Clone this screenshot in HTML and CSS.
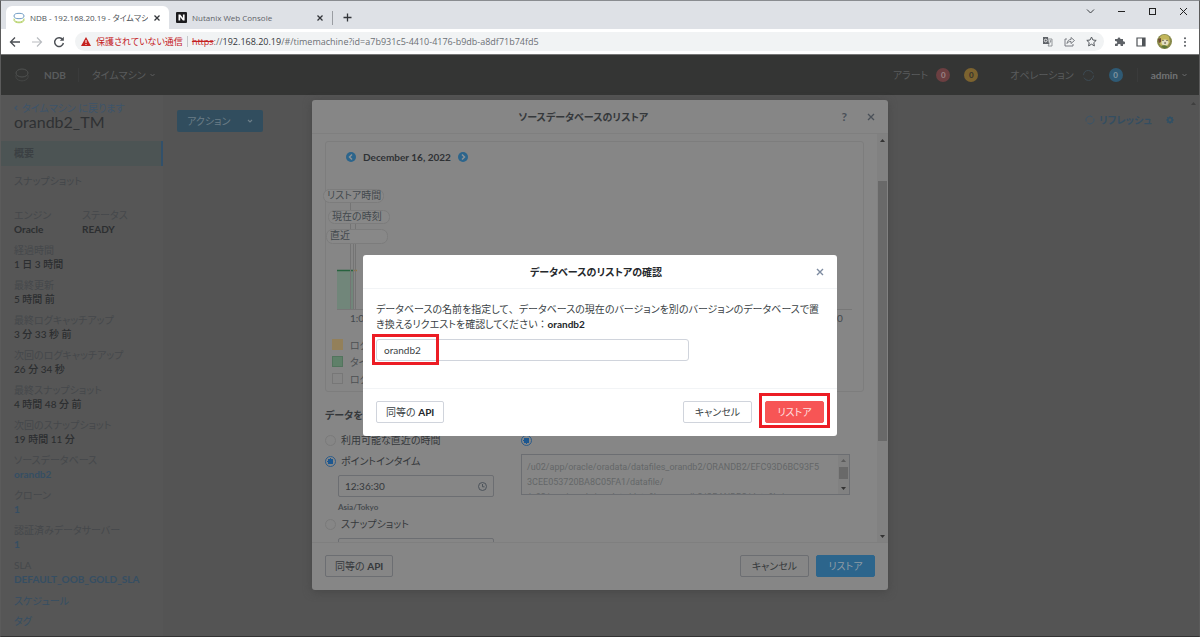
FILE: index.html
```html
<!DOCTYPE html>
<html lang="ja">
<head>
<meta charset="UTF-8">
<meta name="viewport" content="width=device-width, initial-scale=1.0">
<title>NDB - 192.168.20.19 - タイムマシン</title>
<link rel="stylesheet" href="styles.css">
</head>
<body>

    <!-- browser window -->
    <header class="browser">
        <div class="tab-strip">
            <div class="tab active">
                <svg width="12" height="12" viewBox="0 0 12 12" fill="none" stroke-width="1"><ellipse cx="6" cy="4" rx="5" ry="2.7" stroke="#6f9cc4"/><path d="M1 6.5c0 4.8 10 4.8 10 0M1 7.5v1c1 3 9 3 10 0v-1" stroke="#b7d36b"/></svg>
                <span class="tab-title">NDB - 192.168.20.19 - タイムマシン</span>
                <button class="tab-close" aria-label="閉じる"><svg width="8" height="8" viewBox="0 0 8 8"><path d="M1.5 1.5l5 5M6.5 1.5l-5 5" stroke="#33363a" stroke-width="1.3"/></svg></button>
            </div>
            <div class="tab">
                <svg width="11" height="11" viewBox="0 0 11 11"><rect width="11" height="11" rx="1" fill="#1c1c1e"/><path d="M2.5 8.5v-6h1.8l2.6 3.6V2.5h1.7v6H6.900L4.200 4.900v3.600z" fill="#fff"/></svg>
                <span class="tab-title">Nutanix Web Console</span>
                <button class="tab-close" aria-label="閉じる"><svg width="8" height="8" viewBox="0 0 8 8"><path d="M1.500 1.500l5 5M6.500 1.500l-5 5" stroke="#33363a" stroke-width="1.300"/></svg></button>
            </div>
            <button class="new-tab" aria-label="新しいタブ"><svg width="9" height="9" viewBox="0 0 9 9"><path d="M4.500 .5v8M.5 4.500h8" stroke="#33363a" stroke-width="1.300"/></svg></button>
            <div class="window-buttons">
                <button aria-label="タブを検索"><svg width="9" height="9" viewBox="0 0 9 9" fill="none"><path d="M1 2.500l3.500 3.500 3.500-3.500" stroke="#3c4043"/></svg></button>
                <button aria-label="最小化"><svg width="9" height="9" viewBox="0 0 9 9"><path d="M1 4.500h7" stroke="#222"/></svg></button>
                <button aria-label="最大化"><svg width="9" height="9" viewBox="0 0 9 9" fill="none"><rect x="1.500" y="1.500" width="6" height="6" stroke="#222"/></svg></button>
                <button aria-label="ウィンドウを閉じる"><svg width="9" height="9" viewBox="0 0 9 9"><path d="M1 1l7 7M8 1l-7 7" stroke="#222"/></svg></button>
            </div>
        </div>
        <div class="toolbar">
            <button aria-label="戻る"><svg width="12" height="12" viewBox="0 0 12 12" fill="none" stroke="#4b4f54" stroke-width="1.300"><path d="M11 6H1.500M6 1.500L1.500 6 6 10.500"/></svg></button>
            <button aria-label="進む"><svg width="12" height="12" viewBox="0 0 12 12" fill="none" stroke="#b9bcc0" stroke-width="1.200"><path d="M1 6h9.500M6 1.500L10.500 6 6 10.500"/></svg></button>
            <button aria-label="再読み込み"><svg width="12" height="12" viewBox="0 0 12 12" fill="none" stroke="#4b4f54" stroke-width="1.400"><path d="M9.700 3.600A4.400 4.400 0 1 0 10.400 7"/><path d="M10.800 .8v4H6.800z" fill="#4b4f54" stroke="none"/></svg></button>
            <div class="address">
                <svg width="10" height="9" viewBox="0 0 10 9"><path d="M5 0l5 9H0z" fill="#c5221f"/><path d="M5 3v3M5 7v1" stroke="#fff"/></svg>
                <span class="insecure">保護されていない通信</span>
                <span class="url"><s>https</s>://<b>192.168.20.19</b>/#/timemachine?id=a7b931c5-4410-4176-b9db-a8df71b74fd5</span>
                <div class="address-icons">
                    <svg width="11" height="11" viewBox="0 0 11 11"><path d="M1 1h5l1 7H1z" fill="#5f6368"/><path d="M6.500 3H10v7H6l1-2M7.500 5H9.500M8.500 4.500v1c0 1-1 2-1.500 2" fill="none" stroke="#7d8186" stroke-width=".8"/><circle cx="3.700" cy="4.500" r="1.400" fill="none" stroke="#fff" stroke-width=".8"/></svg>
                    <svg width="11" height="11" viewBox="0 0 11 11" fill="none" stroke="#6d7176" stroke-width=".9"><path d="M3 3H1v7h8V8"/><path d="M3 7.500c.4-3 2-4 4-4v-2L10.500 4.500 7 7.500v-2c-2 0-3 .4-4 2z"/></svg>
                    <svg width="11" height="11" viewBox="0 0 11 11" fill="none" stroke="#55595e"><path d="M5.500 1l1.400 3 3.300.4-2.400 2.200.6 3.300-2.900-1.700-2.900 1.700.6-3.300L.8 4.400 4.100 4z"/></svg>
                </div>
            </div>
            <div class="extensions">
                <svg width="11" height="11" viewBox="0 0 11 11"><path d="M1 3h2.600a1.400 1.400 0 1 1 2.800 0H9v2.600a1.400 1.400 0 1 1 0 2.400V10H6.500a1.400 1.400 0 1 0-2.600 0H1V7.600a1.400 1.400 0 1 0 0-2.400z" fill="#5f6368"/></svg>
                <svg width="10" height="10" viewBox="0 0 10 10"><path d="M1 1h8v8H1z" fill="#fff" stroke="#4f5357" stroke-width="1.200"/><path d="M6 1h3v8H6z" fill="#4f5357"/></svg>
                <svg width="15" height="15" viewBox="0 0 15 15"><circle cx="7.500" cy="7.500" r="7.500" fill="#87894a"/><path d="M3 3c2-3 7-3 9 0l1 5-3 5H5L2 9z" fill="#c2b65a"/><path d="M1 5l3-1v4L2 9z" fill="#704d36"/><ellipse cx="8" cy="8.500" rx="3.500" ry="3" fill="#e3dfc2"/><path d="M5.500 6h1v1h-1zM9.500 6h1v1h-1zM7.300 8.500h1.600v1H7.300z" fill="#352d22"/><path d="M4 12c2-1 5-1 7 1-2 2-5 2-7-1z" fill="#5d7638"/></svg>
                <svg width="4" height="10" viewBox="0 0 4 10" fill="#55595e"><circle cx="2" cy="1.200" r="1"/><circle cx="2" cy="5" r="1"/><circle cx="2" cy="8.800" r="1"/></svg>
            </div>
        </div>
    </header>

    <!-- application -->
    <div class="app">
        <nav class="topbar">
            <svg class="logo" width="14" height="14" viewBox="0 0 14 14" fill="none" stroke="#505251"><ellipse cx="7" cy="5" rx="6" ry="4"/><path d="M1 7v2.500c2 4.500 10 4.500 12 0V7" stroke="#444645"/></svg>
            <span class="product">NDB</span>
            <a href="#" class="top-menu">タイムマシン <svg width="5" height="4" viewBox="0 0 5 4" fill="none" stroke="#5c5e5f"><path d="M.5 1l2 2 2-2"/></svg></a>
            <div class="top-right">
                <span>アラート</span>
                <span class="badge red">0</span>
                <span class="badge amber">0</span>
                <span class="operations">オペレーション</span>
                <svg width="13" height="13" viewBox="0 0 13 13" fill="none"><circle cx="6.500" cy="6.500" r="5" stroke="#3d4b54" stroke-dasharray="13 2.700"/></svg>
                <span class="badge blue">0</span>
                <a href="#" class="admin">admin <svg width="5" height="4" viewBox="0 0 5 4" fill="none" stroke="#6a6c6d"><path d="M.5 1l2 2 2-2"/></svg></a>
            </div>
        </nav>
        <div class="workspace">
            <aside class="sidebar">
                <a href="#" class="back"><svg width="4" height="6" viewBox="0 0 4 6" fill="none" stroke="#3d546a" stroke-width="1.200"><path d="M3 .8L1 3l2 2.200"/></svg>タイムマシン に戻ります</a>
                <h1>orandb2_TM</h1>
                <a href="#" class="side-item current">概要</a>
                <a href="#" class="side-item">スナップショット</a>
                <dl class="facts">
                    <div class="pair">
                        <div><dt>エンジン</dt><dd>Oracle</dd></div>
                        <div><dt>ステータス</dt><dd>READY</dd></div>
                    </div>
                    <div><dt>経過時間</dt><dd>1 日 3 時間</dd></div>
                    <div><dt>最終更新</dt><dd>5 時間 前</dd></div>
                    <div><dt>最終ログキャッチアップ</dt><dd>3 分 33 秒 前</dd></div>
                    <div><dt>次回のログキャッチアップ</dt><dd>26 分 34 秒</dd></div>
                    <div><dt>最終スナップショット</dt><dd>4 時間 48 分 前</dd></div>
                    <div><dt>次回のスナップショット</dt><dd>19 時間 11 分</dd></div>
                    <div><dt>ソースデータベース</dt><dd><a href="#">orandb2</a></dd></div>
                    <div><dt>クローン</dt><dd><a href="#">1</a></dd></div>
                    <div><dt>認証済みデータサーバー</dt><dd><a href="#">1</a></dd></div>
                    <div><dt>SLA</dt><dd><a href="#">DEFAULT_OOB_GOLD_SLA</a></dd></div>
                </dl>
                <a href="#" class="side-link">スケジュール</a>
                <a href="#" class="side-link">タグ</a>
            </aside>
            <main class="content">
                <button class="action">アクション <svg width="6" height="5" viewBox="0 0 6 5" fill="none" stroke="#6b7d87" stroke-width="1.200"><path d="M1 1l2 2 2-2"/></svg></button>
                <div class="page-tools">
                    <a href="#"><svg width="10" height="10" viewBox="0 0 10 10" fill="none" stroke="#3b5468"><path d="M1.200 6.500A4 4 0 0 1 7.500 2M8.800 3.500A4 4 0 0 1 2.500 8"/></svg> リフレッシュ</a>
                    <button aria-label="設定"><svg width="8" height="8" viewBox="0 0 8 8" fill="none"><circle cx="4" cy="4" r="2.200" stroke="#2f5066" stroke-width="1.600"/><path d="M4 0v1.500M4 6.500V8M0 4h1.500M6.500 4H8M1.200 1.200l1 1M5.800 5.800l1 1M6.800 1.200l-1 1M1.200 6.800l1-1" stroke="#2f5066"/></svg></button>
                </div>
                <svg class="scroll-up" width="5" height="3" viewBox="0 0 5 3"><path d="M0 3L2.500 0 5 3z" fill="#3f3f3f"/></svg>
            </main>
        </div>
    </div>

    <!-- restore dialog -->
    <div class="layer">
        <section class="dialog restore" role="dialog" aria-labelledby="restore-title">
            <div class="dialog-head">
                <h2 id="restore-title">ソースデータベースのリストア</h2>
                <div class="head-buttons">
                    <button aria-label="ヘルプ">?</button>
                    <button aria-label="閉じる"><svg width="8" height="8" viewBox="0 0 8 8"><path d="M1 1l6 6M7 1L1 7" stroke="#4a5058" stroke-width="1.300"/></svg></button>
                </div>
            </div>
            <div class="dialog-body">
                <div class="scroll-area">
                    <div class="timeline">
                        <div class="date-nav">
                            <button aria-label="前の日"><svg width="10" height="10" viewBox="0 0 10 10" fill="none"><circle cx="5" cy="5" r="5" fill="#2c658c"/><path d="M6 2.500L3.500 5 6 7.500" stroke="#8c9296" stroke-width="1.500"/></svg></button>
                            <span>December 16, 2022</span>
                            <button aria-label="次の日"><svg width="10" height="10" viewBox="0 0 10 10" fill="none"><circle cx="5" cy="5" r="5" fill="#2c658c"/><path d="M4 2.500L6.500 5 4 7.500" stroke="#8c9296" stroke-width="1.500"/></svg></button>
                        </div>
                        <svg class="chart" width="100%" height="146">
                            <rect x="11" y="91" width="16" height="38" fill="#71867a"/>
                            <path d="M11 90.500h16" stroke="#27633f" stroke-width="1.500"/>
                            <path d="M27 90.500h4" stroke="#92763f" stroke-width="1.500"/>
                            <path d="M11 129.500h515" stroke="#777"/>
                            <path d="M24.500 20v109M27.500 62v67M29.500 42v87" stroke="#747474"/>
                            <g fill="#888" stroke="#7c7c7c">
                                <rect x="-2.500" y="9.500" width="60" height="13" rx="6"/>
                                <rect x="2.500" y="30.500" width="61" height="13" rx="6"/>
                                <rect x=".5" y="49.500" width="61" height="14" rx="6"/>
                            </g>
                            <text x="1" y="19">リストア時間</text>
                            <text x="6" y="40">現在の時刻</text>
                            <text x="4" y="59">直近</text>
                            <text x="24" y="142">1:00</text>
                            <text x="511" y="142">0</text>
                        </svg>
                        <ul class="legend">
                            <li><span class="swatch log"></span>ログ</li>
                            <li><span class="swatch time"></span>タイ</li>
                            <li><span class="swatch"></span>ログ</li>
                        </ul>
                    </div>
                    <h3>データを</h3>
                    <form class="restore-form">
                        <div class="choices">
                            <label class="choice"><input type="radio" name="point"> 利用可能な直近の時間</label>
                            <label class="choice"><input type="radio" name="point" checked> ポイントインタイム</label>
                            <div class="time-field">
                                <input type="text" value="12:36:30" aria-label="時刻">
                                <svg width="9" height="9" viewBox="0 0 9 9" fill="none" stroke="#4c535a"><circle cx="4.500" cy="4.500" r="4"/><path d="M4.500 2v2.800H6.500"/></svg>
                            </div>
                            <span class="zone">Asia/Tokyo</span>
                            <label class="choice"><input type="radio" name="point"> スナップショット</label>
                            <select class="snapshot" aria-label="スナップショット"></select>
                        </div>
                        <div class="location">
                            <label class="choice"><input type="radio" name="location" aria-label="場所" checked></label>
                            <div class="path-box">
                                <textarea aria-label="パス" readonly>/u02/app/oracle/oradata/datafiles_orandb2/ORANDB2/EFC93D6BC93F5
3CEE053720BA8C05FA1/datafile/
/u02/app/oracle/oradata/datafiles_orandb2/ORANDB2/datafile/</textarea>
                                <div class="mini-scroll">
                                    <svg width="5" height="3" viewBox="0 0 5 3"><path d="M0 3L2.500 0 5 3z" fill="#5c5c5c"/></svg>
                                    <span class="mini-thumb"></span>
                                    <svg width="5" height="3" viewBox="0 0 5 3"><path d="M0 0h5L2.500 3z" fill="#333"/></svg>
                                </div>
                            </div>
                        </div>
                    </form>
                </div>
                <div class="scrollbar">
                    <svg width="5" height="3" viewBox="0 0 5 3"><path d="M0 3L2.500 0 5 3z" fill="#333"/></svg>
                    <span class="thumb"></span>
                    <svg width="5" height="3" viewBox="0 0 5 3"><path d="M0 0h5L2.500 3z" fill="#333"/></svg>
                </div>
            </div>
            <div class="dialog-foot">
                <button class="btn">同等の <b>API</b></button>
                <button class="btn push">キャンセル</button>
                <button class="btn primary">リストア</button>
            </div>
        </section>
    </div>

    <!-- confirmation dialog -->
    <div class="layer upper">
        <section class="dialog confirm" role="dialog" aria-labelledby="confirm-title">
            <div class="dialog-head">
                <h2 id="confirm-title">データベースのリストアの確認</h2>
                <div class="head-buttons">
                    <button aria-label="閉じる"><svg width="8" height="8" viewBox="0 0 8 8"><path d="M1 1l6 6M7 1L1 7" stroke="#7d8ba0" stroke-width="1.400"/></svg></button>
                </div>
            </div>
            <div class="confirm-body">
                <label for="db-name">データベースの名前を指定して<span class="full">、</span>データベースの現在のバージョンを別のバージョンのデータベースで置<br>き換えるリクエストを確認してください<span class="full">：</span><b>orandb2</b></label>
                <div class="name-field">
                    <input type="text" id="db-name" value="orandb2">
                    <span class="mark mark-name"></span>
                </div>
            </div>
            <div class="dialog-foot">
                <button class="btn">同等の <b>API</b></button>
                <button class="btn push">キャンセル</button>
                <div class="marked">
                    <button class="btn danger">リストア</button>
                    <span class="mark mark-button"></span>
                </div>
            </div>
        </section>
    </div>

</body>
</html>
```
FILE: styles.css
```css
* {
    box-sizing: border-box;
}

body {
    margin: 0;
    height: 100vh;
    display: flex;
    flex-direction: column;
    overflow: hidden;
    position: relative;
    font-family: Lato, "Noto Sans CJK JP", sans-serif;
    font-size: 10px;
    font-feature-settings: "palt";
    line-height: 14px;
    border: 1px solid #5b5b5b;
    border-top-color: #898c90;
    border-bottom-color: #333;
    background-color: #545454;
}

svg {
    flex: none;
    display: block;
}

a {
    text-decoration: none;
    color: inherit;
}

button, input, select, textarea {
    font: inherit;
    font-feature-settings: inherit;
    color: inherit;
    margin: 0;
    padding: 0;
    border: none;
    background: none;
}

button {
    cursor: pointer;
}

/* browser window */
.browser {
    font-family: "Open Sans", "Noto Sans CJK JP", sans-serif;
    font-size: 9px;
    color: #5f6368;
    background-color: #dee1e6;
}

.tab-strip {
    display: flex;
    align-items: center;
    height: 28px;
    padding-left: 5px;
}

.tab {
    display: flex;
    align-items: center;
    gap: 5px;
    height: 23px;
    width: 163px;
    padding: 0 8px 0 7px;
    margin-top: 5px;
}

.tab.active {
    background-color: #fff;
    border-radius: 6px 6px 0 0;
    color: #4d5156;
}

.tab-title {
    flex: 1;
    font-size: 8px;
    white-space: nowrap;
    overflow: hidden;
}

.tab-close {
    display: flex;
}

.new-tab {
    display: flex;
    height: 14px;
    align-items: center;
    border-left: 1px solid #9a9da2;
    padding-left: 10px;
    margin-top: 5px;
}

.window-buttons {
    display: flex;
    gap: 22px;
    margin: 0 11px 8px auto;
}

.toolbar {
    display: flex;
    align-items: center;
    gap: 10px;
    height: 25px;
    padding: 0 12px 0 8px;
    background-color: #fff;
}

.toolbar button {
    display: flex;
}

.address {
    flex: 1;
    display: flex;
    align-items: center;
    height: 19px;
    padding: 0 7px 0 6px;
    border-radius: 10px;
    background-color: #f1f3f4;
}

.insecure {
    color: #c5221f;
    padding: 0 4px 0 5px;
    border-right: 1px solid #c4c7ca;
    line-height: 11px;
}

.url {
    padding-left: 4px;
    color: #6c7075;
}

.url s {
    color: #c5221f;
}

.url b {
    font-weight: normal;
    color: #33363a;
}

.address-icons {
    display: flex;
    gap: 11px;
    margin-left: auto;
}

.extensions {
    display: flex;
    align-items: center;
    gap: 11px;
}

/* application */
.app {
    flex: 1;
    min-height: 0;
    display: flex;
    flex-direction: column;
    border-top: 1px solid #777;
}

.topbar {
    display: flex;
    align-items: center;
    height: 40px;
    padding: 0 12px 0 14px;
    background-color: #343534;
    color: #5a5c5d;
}

.product {
    font-weight: bold;
    padding: 0 12px 0 15px;
    border-right: 1px solid #3a3b3b;
}

.top-menu {
    display: flex;
    align-items: center;
    gap: 4px;
    padding-left: 13px;
}

.top-right {
    display: flex;
    align-items: center;
    gap: 8px;
    margin-left: auto;
}

.badge {
    width: 14px;
    height: 14px;
    border-radius: 7px;
    text-align: center;
    font-size: 8px;
    font-weight: bold;
    margin-right: 6px;
}

.badge.red {
    background-color: #6b3f41;
    color: #9a8485;
}

.badge.amber {
    background-color: #7c632f;
    color: #33312c;
    margin-right: 24px;
}

.badge.blue {
    background-color: #2f5a74;
    color: #8296a1;
    margin-left: 6px;
}

.admin {
    display: flex;
    align-items: center;
    gap: 4px;
    font-weight: bold;
    color: #717374;
    padding-left: 13px;
    border-left: 1px solid #3a3b3b;
}

.workspace {
    flex: 1;
    min-height: 0;
    display: flex;
}

.sidebar {
    width: 162px;
    padding-top: 7px;
    background-color: #565656;
    color: #43464a;
    overflow: hidden;
}

.back {
    display: flex;
    align-items: center;
    gap: 4px;
    height: 12px;
    line-height: 12px;
    padding-left: 13px;
    color: #3d546a;
}

h1 {
    margin: 0 0 11px;
    padding-left: 13px;
    font-size: 16px;
    line-height: 16px;
    font-weight: normal;
    color: #2f3133;
}

.side-item {
    display: block;
    line-height: 25px;
    padding-left: 13px;
    margin-bottom: 3px;
}

.side-item.current {
    background-color: #4c5454;
    border-right: 2px solid #32506a;
    font-weight: bold;
    color: #3b4043;
}

.facts {
    margin: 14px 0 0;
    padding-left: 13px;
    display: flex;
    flex-direction: column;
    gap: 7px;
}

.pair {
    display: grid;
    grid-template-columns: 68px 1fr;
}

dt {
    color: #45484b;
}

dd {
    margin: 0;
    font-weight: 500;
    color: #2c2e30;
}

dd a {
    color: #354e63;
}

.pair dd, dd a {
    font-weight: bold;
}

.side-link {
    display: block;
    padding: 6px 0 0 13px;
    color: #354e63;
}

.facts + .side-link {
    padding-top: 8px;
}

.content {
    flex: 1;
    display: flex;
    align-items: flex-start;
    padding: 7px 3px 0 14px;
}

.action {
    display: flex;
    align-items: center;
    justify-content: space-between;
    width: 86px;
    height: 22px;
    margin-top: 8px;
    padding: 0 10px;
    border-radius: 2px;
    background-color: #314d5e;
    color: #6b7d87;
}

.page-tools {
    display: flex;
    align-items: center;
    gap: 14px;
    margin: 11px 17px 0 auto;
    color: #344e61;
    font-weight: bold;
}

.page-tools a {
    display: flex;
    align-items: center;
    gap: 4px;
}

/* dialogs */
.layer {
    position: absolute;
    top: 99px;
    left: 0;
    right: 0;
    display: flex;
    justify-content: center;
}

.layer.upper {
    top: 254px;
}

.dialog {
    border-radius: 3px;
}

.dialog-head {
    display: flex;
    align-items: center;
    height: 34px;
    padding: 0 13px;
}

h2 {
    flex: 1;
    margin: 0;
    font-size: 10px;
    font-weight: bold;
    text-align: center;
}

.head-buttons {
    display: flex;
    align-items: center;
    gap: 20px;
    font-weight: bold;
    font-size: 12px;
}

.dialog-foot {
    display: flex;
    align-items: center;
    gap: 7px;
    height: 48px;
    padding: 0 13px 2px;
}

.btn {
    height: 22px;
    padding: 0 9px;
    border: 1px solid #d0d4dc;
    border-radius: 2px;
    white-space: nowrap;
}

.push {
    width: 69px;
    margin-left: auto;
}

.restore {
    width: 576px;
    background-color: #868686;
    color: #35383b;
    box-shadow: 0 2px 8px #484848;
}

.restore .dialog-head {
    border-bottom: 1px solid #7f7f7f;
}

.restore .head-buttons {
    color: #4a5058;
}

.restore .dialog-foot {
    border-top: 1px solid #7f7f7f;
}

.restore .btn {
    border-color: #6c6e72;
}

.restore .primary {
    width: 59px;
    border-color: #2c658c;
    background-color: #2c658c;
    color: #909da6;
}

.dialog-body {
    display: flex;
    height: 408px;
    overflow: hidden;
}

.scroll-area {
    flex: 1;
    padding: 7px 13px 0;
}

.timeline {
    height: 251px;
    border: 1px solid #7d7d7d;
    border-radius: 3px;
    color: #484c50;
}

.date-nav {
    display: flex;
    align-items: center;
    gap: 7px;
    padding: 8px 0 0 20px;
    margin-bottom: 16px;
    font-weight: bold;
    color: #2f3235;
}

.date-nav button {
    display: flex;
}

.chart {
    overflow: visible;
    fill: #43484d;
}

.legend {
    list-style: none;
    margin: 10px 0 0;
    padding: 0 0 0 6px;
    color: #4d5053;
}

.legend li {
    display: flex;
    align-items: center;
    gap: 7px;
    height: 17px;
}

.swatch {
    width: 11px;
    height: 11px;
    border: 1px solid #777;
}

.swatch.log {
    background-color: #93805a;
    border: none;
}

.swatch.time {
    background-color: #5f8069;
    border: 1px solid #52745d;
}

h3 {
    margin: 16px 0 11px;
    font-size: 10px;
    font-weight: bold;
}

.restore-form {
    display: grid;
    grid-template-columns: 196px 1fr;
}

.choices {
    display: flex;
    flex-direction: column;
}

.choice {
    display: flex;
    align-items: center;
    gap: 5px;
    height: 14px;
}

.choice + .choice {
    margin: 7px 0;
}

input[type="radio"] {
    appearance: none;
    width: 11px;
    height: 11px;
    border: 1px solid #7a7a7a;
    border-radius: 50%;
}

input[type="radio"]:checked {
    border-color: #2c5c8a;
    background: radial-gradient(#1c5790 3px, transparent 3px);
}

.time-field {
    display: flex;
    align-items: center;
    width: 156px;
    height: 22px;
    margin-left: 13px;
    padding: 0 6px;
    border: 1px solid #6c6e72;
    border-radius: 2px;
}

.time-field input {
    flex: 1;
    min-width: 0;
}

.zone {
    margin: 3px 0 3px 13px;
    font-size: 8px;
    font-weight: bold;
    color: #484c50;
}

.snapshot {
    appearance: none;
    width: 156px;
    height: 22px;
    flex: none;
    margin: 7px 0 0 13px;
    border: 1px solid #6c6e72;
    border-radius: 2px;
}

.location {
    margin-right: 14px;
}

.path-box {
    display: flex;
    height: 41px;
    margin-top: 7px;
    border: 1px solid #6c6e72;
}

.path-box textarea {
    flex: 1;
    min-width: 0;
    resize: none;
    overflow: hidden;
    white-space: pre;
    padding: 5px 0 0 5px;
    font-family: Roboto, sans-serif;
    font-size: 9px;
    line-height: 15px;
    color: #646668;
    outline: none;
}

.mini-scroll {
    display: flex;
    flex-direction: column;
    align-items: center;
    justify-content: space-between;
    width: 11px;
    padding: 4px 0;
    background-color: #818181;
}

.mini-thumb {
    width: 9px;
    height: 12px;
    margin-bottom: 3px;
    background-color: #696969;
}

.scrollbar {
    display: flex;
    flex-direction: column;
    align-items: center;
    width: 11px;
    padding: 5px 0 4px;
    background-color: #818181;
}

.thumb {
    width: 9px;
    height: 260px;
    margin: 39px 0 auto;
    background-color: #696969;
}

.confirm {
    width: 474px;
    background-color: #fff;
    color: #3a3f45;
}

.confirm h2 {
    color: #25282c;
}

.confirm .dialog-head {
    border-bottom: 1px solid #f2f4f6;
}

.confirm-body {
    height: 99px;
    padding: 13px 13px 0;
    line-height: 15px;
}

.confirm-body label {
    display: block;
    white-space: nowrap;
}

/* full-width punctuation */
.full {
    font-feature-settings: normal;
}

.confirm b {
    color: #22262a;
}

.confirm .dialog-foot {
    border-top: 1px solid #f2f4f6;
    gap: 13px;
}

.name-field {
    position: relative;
    width: 313px;
    margin-top: 7px;
}

.name-field input {
    display: block;
    width: 100%;
    height: 22px;
    padding: 0 7px;
    border: 1px solid #d0d4dc;
    border-radius: 3px;
}

.marked {
    position: relative;
}

.danger {
    display: block;
    width: 59px;
    border-color: #f75555;
    background-color: #f75555;
    color: #ffe3e3;
}

/* red frames round the field and the button */
.mark {
    position: absolute;
    border: 3px solid #ec1c24;
    pointer-events: none;
}

.mark-name {
    top: -5px;
    left: -4px;
    width: 67px;
    height: 31px;
}

.mark-button {
    top: -8px;
    left: -6px;
    width: 71px;
    height: 35px;
}
```
